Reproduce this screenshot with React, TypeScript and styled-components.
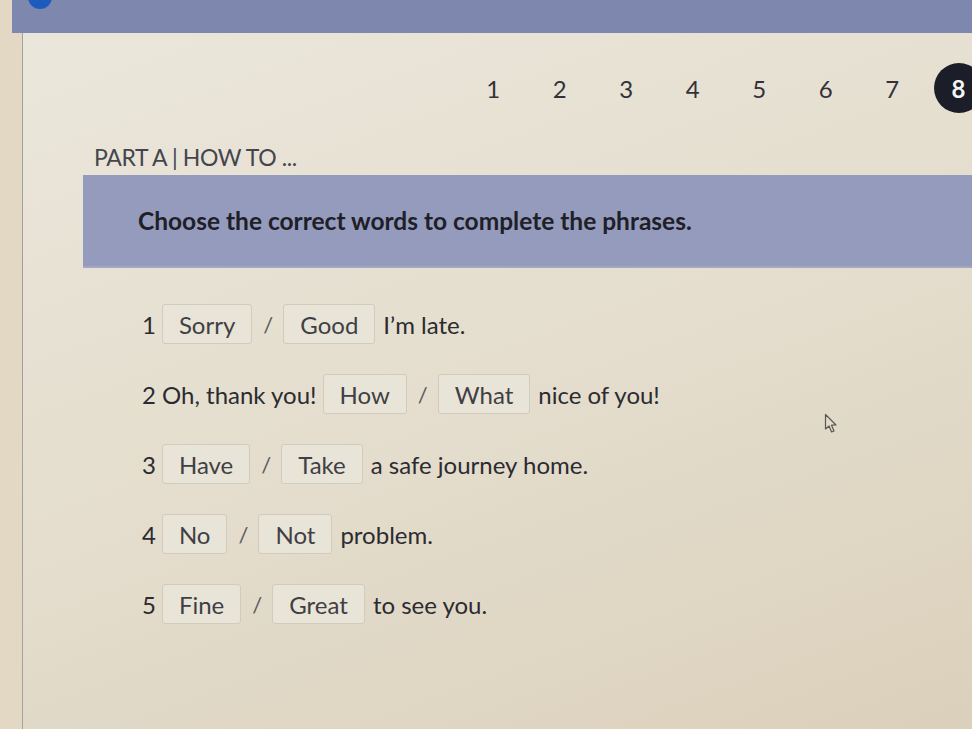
import React from 'react';
import styled, { createGlobalStyle } from 'styled-components';

const GlobalStyle = createGlobalStyle`
  html, body {
    margin: 0;
    padding: 0;
  }
  body {
    width: 972px;
    height: 729px;
    overflow: hidden;
    font-family: Lato, 'Noto Sans', sans-serif;
    background: linear-gradient(160deg, #ebe7dc 0%, #e4ddcd 55%, #dbd0bb 100%);
  }
`;

type Choice = { a: string; b: string };

const items: { lead: string; choice: Choice; tail: string }[] = [
  { lead: '1', choice: { a: 'Sorry', b: 'Good' }, tail: 'I’m late.' },
  { lead: '2 Oh, thank you!', choice: { a: 'How', b: 'What' }, tail: 'nice of you!' },
  { lead: '3', choice: { a: 'Have', b: 'Take' }, tail: 'a safe journey home.' },
  { lead: '4', choice: { a: 'No', b: 'Not' }, tail: 'problem.' },
  { lead: '5', choice: { a: 'Fine', b: 'Great' }, tail: 'to see you.' }
];

const steps = [1, 2, 3, 4, 5, 6, 7, 8];
const current = 8;

const App = () => {
  return (
    <>
      <GlobalStyle />
      <Shell>
        <Gutter />
        <Frame>
          <TopBar>
            <Logo />
          </TopBar>
          <Content>
            <Steps>
              {steps.map((n) => (
                <Step key={n} active={n === current}>
                  {n}
                </Step>
              ))}
            </Steps>
            <PartTitle>PART A | HOW TO ...</PartTitle>
            <Instruction>Choose the correct words to complete the phrases.</Instruction>
            <List>
              {items.map((item, index) => (
                <Row key={index}>
                  <Lead>{item.lead}</Lead>
                  <WordBox>{item.choice.a}</WordBox>
                  <Slash>/</Slash>
                  <WordBox>{item.choice.b}</WordBox>
                  <Tail>{item.tail}</Tail>
                </Row>
              ))}
            </List>
            <Cursor width="16" height="22" viewBox="0 0 16 22">
              <path
                d="M1.5 1.5 L1.5 16 L5 13 L7.6 19 L10 18 L7.5 12.2 L12 12 Z"
                fill="#e2dacb"
                stroke="#5a5752"
                strokeWidth="1.2"
                strokeLinejoin="round"
              />
            </Cursor>
          </Content>
        </Frame>
      </Shell>
    </>
  );
};

export default App;

const Shell = styled.div`
  display: flex;
  width: 972px;
  height: 729px;
  overflow: hidden;
`;

const Gutter = styled.div`
  width: 22px;
  flex-shrink: 0;
  background: #e2d8c4;
`;

const Frame = styled.div`
  flex: 1;
  display: flex;
  flex-direction: column;
  border-left: 1px solid #a3a19b;
  min-width: 0;
`;

const TopBar = styled.div`
  height: 33px;
  background-color: #7e87ad;
  margin-left: -11px;
  padding-left: 16px;
  display: flex;
  align-items: flex-start;
  overflow: hidden;
`;

const Logo = styled.div`
  width: 24px;
  height: 24px;
  margin-top: -15px;
  border-radius: 50%;
  background: #1d5cbd;
`;

const Content = styled.div`
  position: relative;
  padding: 30px 0 0 60px;
  display: flex;
  flex-direction: column;
`;

const Steps = styled.div`
  display: flex;
  margin-left: 377px;
  height: 50px;
  align-items: center;
`;

interface StepProps {
  active?: boolean;
}

const Step = styled.div<StepProps>`
  width: 66.5px;
  flex-shrink: 0;
  display: flex;
  justify-content: center;
  align-items: center;
  font-size: 24px;
  color: #333238;

  ${(props) =>
    props.active &&
    `
    width: 50px;
    height: 50px;
    margin-left: 8px;
    border-radius: 50%;
    background: #1b1e29;
    color: #f4f4f4;
    font-weight: 700;
  `}
`;

const PartTitle = styled.div`
  margin-top: 31px;
  padding-left: 11px;
  font-size: 23px;
  line-height: 26px;
  color: #45464d;
  letter-spacing: -0.4px;
`;

const Instruction = styled.div`
  margin-top: 5px;
  height: 93px;
  display: flex;
  align-items: center;
  padding-left: 55px;
  background-color: #949bbd;
  font-size: 24.5px;
  font-weight: 700;
  color: #1f2027;
  border-bottom: 2px solid #a3a8c2;
  box-sizing: border-box;
`;

const List = styled.div`
  display: flex;
  flex-direction: column;
  gap: 30px;
  margin-top: 36px;
  padding-left: 59px;
`;

const Row = styled.div`
  display: flex;
  align-items: center;
  height: 40px;
  font-size: 24px;
  color: #2b2b30;
`;

const Lead = styled.span`
  margin-right: 6px;
`;

const WordBox = styled.span`
  height: 40px;
  box-sizing: border-box;
  display: inline-flex;
  align-items: center;
  padding: 0 16px;
  border: 1px solid #d2cbbb;
  border-radius: 3px;
  background: #e9e4d8;
  color: #3f3f44;
`;

const Slash = styled.span`
  margin: 0 10px 0 11px;
  color: #5a5a5e;
  font-size: 22px;
`;

const Tail = styled.span`
  margin-left: 8px;
`;

const Cursor = styled.svg`
  position: absolute;
  left: 801px;
  top: 380px;
`;
